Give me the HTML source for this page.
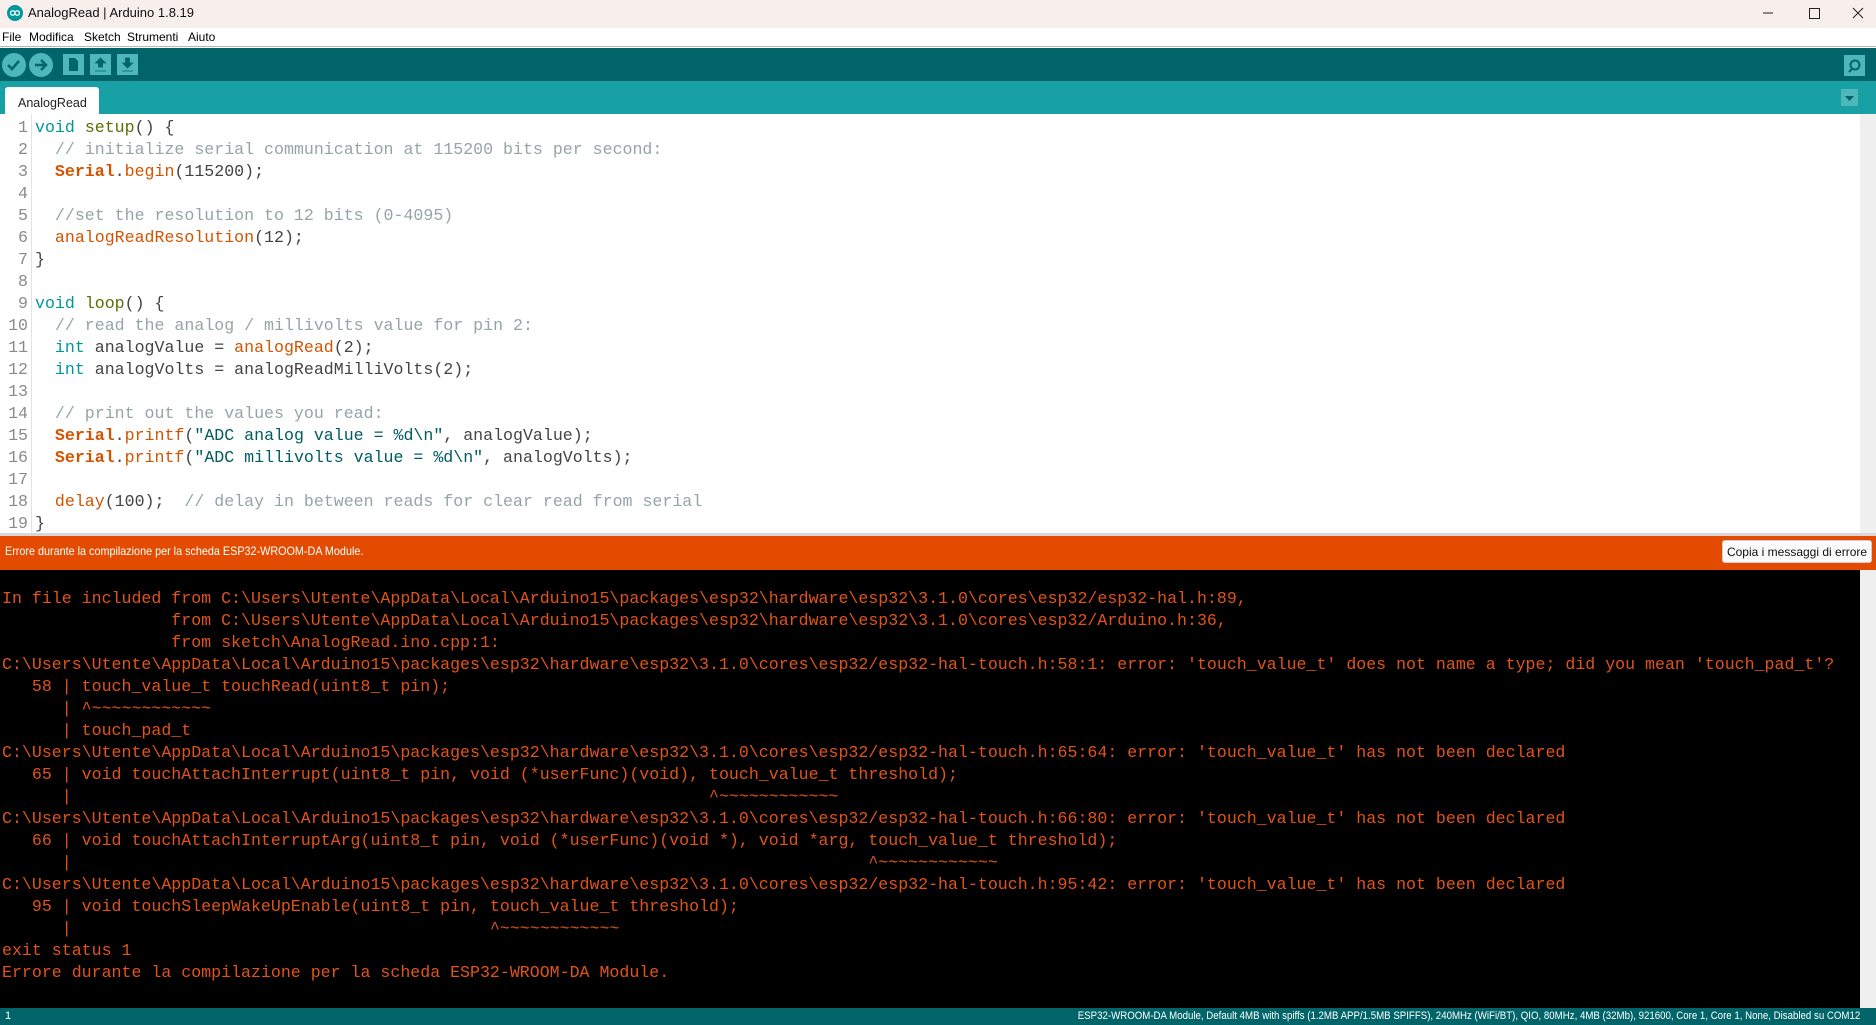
<!DOCTYPE html>
<html><head><meta charset="utf-8"><style>
*{margin:0;padding:0;box-sizing:border-box}
body{width:1876px;height:1025px;overflow:hidden;background:#fff;font-family:"Liberation Sans",sans-serif;position:relative}
.abs{position:absolute}
#title{left:0;top:0;width:1876px;height:28px;background:#f7efec}
#title .t{left:28px;top:5px;font-size:13px;color:#111}
#menu{left:0;top:28px;width:1876px;height:19px;background:#fff;border-bottom:1px solid #b8b8b8;font-size:12px}
#menu span{position:absolute;top:2px}
#tool{left:0;top:48px;width:1876px;height:33px;background:#006468}
#tabs{left:0;top:81px;width:1876px;height:33px;background:#17a1a5}
#tab{left:5px;top:87px;width:94px;height:27px;background:#fff;border-radius:3px 3px 0 0;font-size:12.5px;color:#222;padding:9px 0 0 13px}
#ed{left:0;top:114px;width:1876px;height:420px;background:#fff;overflow:hidden}
#gut{left:0;top:114px;width:32px;height:420px;border-right:1px solid #e3e3e3}
pre{font-family:"Liberation Mono",monospace;font-size:16.6px;line-height:22px;position:absolute}
#ln{left:0;top:117px;width:28px;text-align:right;color:#8a8a8a}
#code{left:35px;top:117px;color:#444}
.k{color:#00979c}.f{color:#5e6d03}.c{color:#95a5a6}.o{color:#d35400}.b{color:#d35400;font-weight:bold}.s{color:#005c5f}
#vsb{left:1860px;top:114px;width:16px;height:420px;background:#f0f0f0}
#bar{left:0;top:533px;width:1876px;height:37px;background:#e34c00;border-top:3px solid #d8d8d8}
#bar .t{left:5px;top:8px;font-size:12px;color:#fff;transform:scaleX(.9);transform-origin:left}
#copy{left:1722px;top:540px;width:150px;height:23px;background:#fafafa;border:1px solid #ccc;border-radius:3px;font-size:12px;color:#111;text-align:center;padding-top:4px}
#con{left:0;top:570px;width:1876px;height:438px;background:#000}
#cout{left:2px;top:588px;color:#e0541a}
#csb{left:1860px;top:570px;width:16px;height:438px;background:#efefef}
#st{left:0;top:1008px;width:1876px;height:17px;background:#006468;color:#fff;font-size:11px}
</style></head><body>
<div id="title" class="abs">
<svg class="abs" style="left:7px;top:5px" width="16" height="16"><circle cx="8" cy="8" r="8" fill="#00979c"/><path d="M3.5 8a2 2 0 1 0 4.5 0a2 2 0 1 0 4.5 0a2 2 0 1 0-4.5 0a2 2 0 1 0-4.5 0" fill="none" stroke="#fff" stroke-width="1.3"/></svg>
<span class="abs t">AnalogRead | Arduino 1.8.19</span>
<svg class="abs" style="left:1760px;top:6px" width="110" height="16"><path d="M3 7h10" stroke="#222" stroke-width="1"/><rect x="49.5" y="2.5" width="10" height="10" fill="none" stroke="#222"/><path d="M93 2l10 10M103 2l-10 10" stroke="#222"/></svg>
</div>
<div id="menu" class="abs"><span style="left:2px">File</span><span style="left:29px">Modifica</span><span style="left:84px">Sketch</span><span style="left:127px">Strumenti</span><span style="left:188px">Aiuto</span></div>
<div id="tool" class="abs"></div>
<svg class="abs" style="left:0;top:48px" width="150" height="33">
<circle cx="14" cy="17" r="12" fill="#4db7bb"/><path d="M8 17l4 4 7-8" fill="none" stroke="#006468" stroke-width="2.5"/>
<circle cx="41" cy="17" r="12" fill="#4db7bb"/><path d="M35 17h10M41 12l5 5-5 5" fill="none" stroke="#006468" stroke-width="2.5"/>
<rect x="63" y="6" width="21" height="21" fill="#4db7bb"/><path d="M69 10h6l3 3v10h-9z" fill="#006468"/>
<rect x="90" y="6" width="21" height="21" fill="#4db7bb"/><path d="M100.5 10l-5 5h3v4h4v-4h3z M95 23h11" fill="#006468" stroke="#006468" stroke-width="0.8"/>
<rect x="117" y="6" width="21" height="21" fill="#4db7bb"/><path d="M127.5 20l-5-5h3v-5h4v5h3z M122 23h11" fill="#006468" stroke="#006468" stroke-width="0.8"/>
</svg>
<svg class="abs" style="left:1844px;top:55px" width="22" height="22"><rect width="21" height="21" fill="#4db7bb"/><circle cx="11" cy="10" r="4.5" fill="none" stroke="#006468" stroke-width="2"/><path d="M8 14l-3 3" stroke="#006468" stroke-width="2"/></svg>
<div id="tabs" class="abs"></div>
<div id="tab" class="abs">AnalogRead</div>
<svg class="abs" style="left:1841px;top:89px" width="18" height="18"><rect width="17" height="17" fill="#4db7bb"/><path d="M4 7h9l-4.5 5z" fill="#006468"/></svg>
<div id="ed" class="abs"></div>
<div id="gut" class="abs"></div>
<div id="vsb" class="abs"></div>
<pre id="ln">1
2
3
4
5
6
7
8
9
10
11
12
13
14
15
16
17
18
19</pre>
<pre id="code"><span class="k">void</span> <span class="f">setup</span>() {
  <span class="c">// initialize serial communication at 115200 bits per second:</span>
  <span class="b">Serial</span>.<span class="o">begin</span>(115200);

  <span class="c">//set the resolution to 12 bits (0-4095)</span>
  <span class="o">analogReadResolution</span>(12);
}

<span class="k">void</span> <span class="f">loop</span>() {
  <span class="c">// read the analog / millivolts value for pin 2:</span>
  <span class="k">int</span> analogValue = <span class="o">analogRead</span>(2);
  <span class="k">int</span> analogVolts = analogReadMilliVolts(2);

  <span class="c">// print out the values you read:</span>
  <span class="b">Serial</span>.<span class="o">printf</span>(<span class="s">"ADC analog value = %d\n"</span>, analogValue);
  <span class="b">Serial</span>.<span class="o">printf</span>(<span class="s">"ADC millivolts value = %d\n"</span>, analogVolts);

  <span class="o">delay</span>(100);  <span class="c">// delay in between reads for clear read from serial</span>
}</pre>
<div id="bar" class="abs"><span class="abs t">Errore durante la compilazione per la scheda ESP32-WROOM-DA Module.</span></div>
<div id="copy" class="abs">Copia i messaggi di errore</div>
<div id="con" class="abs"></div>
<div id="csb" class="abs"></div>
<pre id="cout">In file included from C:\Users\Utente\AppData\Local\Arduino15\packages\esp32\hardware\esp32\3.1.0\cores\esp32/esp32-hal.h:89,
                 from C:\Users\Utente\AppData\Local\Arduino15\packages\esp32\hardware\esp32\3.1.0\cores\esp32/Arduino.h:36,
                 from sketch\AnalogRead.ino.cpp:1:
C:\Users\Utente\AppData\Local\Arduino15\packages\esp32\hardware\esp32\3.1.0\cores\esp32/esp32-hal-touch.h:58:1: error: 'touch_value_t' does not name a type; did you mean 'touch_pad_t'?
   58 | touch_value_t touchRead(uint8_t pin);
      | ^~~~~~~~~~~~~
      | touch_pad_t
C:\Users\Utente\AppData\Local\Arduino15\packages\esp32\hardware\esp32\3.1.0\cores\esp32/esp32-hal-touch.h:65:64: error: 'touch_value_t' has not been declared
   65 | void touchAttachInterrupt(uint8_t pin, void (*userFunc)(void), touch_value_t threshold);
      |                                                                ^~~~~~~~~~~~~
C:\Users\Utente\AppData\Local\Arduino15\packages\esp32\hardware\esp32\3.1.0\cores\esp32/esp32-hal-touch.h:66:80: error: 'touch_value_t' has not been declared
   66 | void touchAttachInterruptArg(uint8_t pin, void (*userFunc)(void *), void *arg, touch_value_t threshold);
      |                                                                                ^~~~~~~~~~~~~
C:\Users\Utente\AppData\Local\Arduino15\packages\esp32\hardware\esp32\3.1.0\cores\esp32/esp32-hal-touch.h:95:42: error: 'touch_value_t' has not been declared
   95 | void touchSleepWakeUpEnable(uint8_t pin, touch_value_t threshold);
      |                                          ^~~~~~~~~~~~~
exit status 1
Errore durante la compilazione per la scheda ESP32-WROOM-DA Module.</pre>
<div id="st" class="abs"><span class="abs" style="left:5px;top:2px">1</span><span class="abs" style="right:16px;top:2px;transform:scaleX(.88);transform-origin:right">ESP32-WROOM-DA Module, Default 4MB with spiffs (1.2MB APP/1.5MB SPIFFS), 240MHz (WiFi/BT), QIO, 80MHz, 4MB (32Mb), 921600, Core 1, Core 1, None, Disabled su COM12</span></div>
</body></html>
